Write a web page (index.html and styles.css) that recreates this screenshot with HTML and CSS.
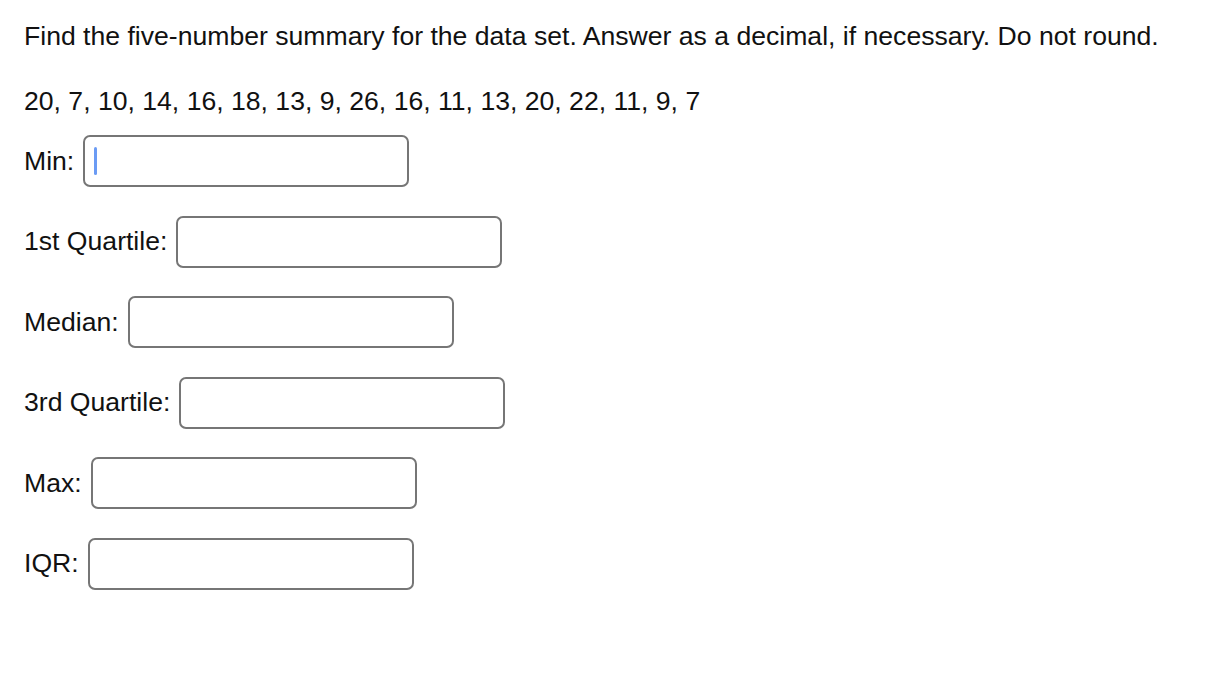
FILE: index.html
```html
<!DOCTYPE html>
<html>
<head>
<meta charset="utf-8">
<link rel="stylesheet" href="styles.css">
</head>
<body>
<main class="problem">
  <p class="prompt">Find the five-number summary for the data set. Answer as a decimal, if necessary. Do not round.</p>
  <p class="data">20, 7, 10, 14, 16, 18, 13, 9, 26, 16, 11, 13, 20, 22, 11, 9, 7</p>
  <form class="answers">
    <div class="row"><label class="label" for="min">Min:</label><span class="field-wrap"><input class="field" id="min" type="text"><span class="caret"></span></span></div>
    <div class="row"><label class="label" for="q1">1st Quartile:</label><span class="field-wrap"><input class="field" id="q1" type="text"></span></div>
    <div class="row"><label class="label" for="med">Median:</label><span class="field-wrap"><input class="field" id="med" type="text"></span></div>
    <div class="row"><label class="label" for="q3">3rd Quartile:</label><span class="field-wrap"><input class="field" id="q3" type="text"></span></div>
    <div class="row"><label class="label" for="max">Max:</label><span class="field-wrap"><input class="field" id="max" type="text"></span></div>
    <div class="row"><label class="label" for="iqr">IQR:</label><span class="field-wrap"><input class="field" id="iqr" type="text"></span></div>
  </form>
</main>
</body>
</html>
```

FILE: styles.css
```css
html, body {
  margin: 0;
  padding: 0;
  background: #ffffff;
}

body {
  font-family: "Liberation Sans", Arial, Helvetica, sans-serif;
  font-size: 26.6px;
  line-height: 29px;
  color: #111111;
}

.problem {
  padding: 22px 24px 0 24px;
}

.prompt {
  margin: 0;
}

.data {
  margin: 36px 0 0 0;
}

.answers {
  margin: 19px 0 0 0;
  display: flex;
  flex-direction: column;
  gap: 28.6px;
}

.row {
  display: flex;
  align-items: baseline;
  gap: 9px;
}

.label {
  color: #111111;
}

.field-wrap {
  position: relative;
  display: inline-flex;
}

.field {
  box-sizing: border-box;
  width: 326px;
  height: 52px;
  margin: 0;
  padding: 0 10px;
  border: 2px solid #767676;
  border-radius: 7px;
  background: #ffffff;
  font-family: inherit;
  font-size: 26.6px;
  color: #111111;
  outline: none;
}

.caret {
  position: absolute;
  left: 11px;
  top: 12px;
  width: 3px;
  height: 28px;
  border-radius: 2px;
  background: #6b9bf4;
}
```
